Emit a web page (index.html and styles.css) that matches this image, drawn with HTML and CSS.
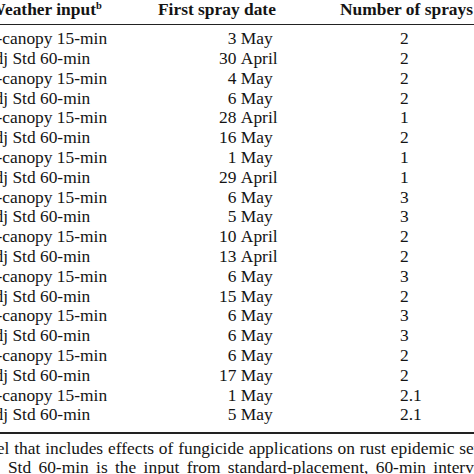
FILE: index.html
```html
<!DOCTYPE html>
<html lang="en">
<head>
<meta charset="utf-8">
<title>First spray dates</title>
<link rel="stylesheet" href="styles.css">
</head>
<body>
<div class="sheet">
  <div class="thead">
    <div class="row head">
      <div class="c1 h1">Weather input<sup>b</sup></div>
      <div class="c2 h2">First spray date</div>
      <div class="c3 h3">Number of sprays</div>
    </div>
  </div>
  <div class="tbody">
    <div class="row"><div class="c1">In-canopy 15-min</div><div class="c2"><span class="num">3</span><span class="mon">May</span></div><div class="c3">2</div></div>
    <div class="row"><div class="c1">Adj Std 60-min</div><div class="c2"><span class="num">30</span><span class="mon">April</span></div><div class="c3">2</div></div>
    <div class="row"><div class="c1">In-canopy 15-min</div><div class="c2"><span class="num">4</span><span class="mon">May</span></div><div class="c3">2</div></div>
    <div class="row"><div class="c1">Adj Std 60-min</div><div class="c2"><span class="num">6</span><span class="mon">May</span></div><div class="c3">2</div></div>
    <div class="row"><div class="c1">In-canopy 15-min</div><div class="c2"><span class="num">28</span><span class="mon">April</span></div><div class="c3">1</div></div>
    <div class="row"><div class="c1">Adj Std 60-min</div><div class="c2"><span class="num">16</span><span class="mon">May</span></div><div class="c3">2</div></div>
    <div class="row"><div class="c1">In-canopy 15-min</div><div class="c2"><span class="num">1</span><span class="mon">May</span></div><div class="c3">1</div></div>
    <div class="row"><div class="c1">Adj Std 60-min</div><div class="c2"><span class="num">29</span><span class="mon">April</span></div><div class="c3">1</div></div>
    <div class="row"><div class="c1">In-canopy 15-min</div><div class="c2"><span class="num">6</span><span class="mon">May</span></div><div class="c3">3</div></div>
    <div class="row"><div class="c1">Adj Std 60-min</div><div class="c2"><span class="num">5</span><span class="mon">May</span></div><div class="c3">3</div></div>
    <div class="row"><div class="c1">In-canopy 15-min</div><div class="c2"><span class="num">10</span><span class="mon">April</span></div><div class="c3">2</div></div>
    <div class="row"><div class="c1">Adj Std 60-min</div><div class="c2"><span class="num">13</span><span class="mon">April</span></div><div class="c3">2</div></div>
    <div class="row"><div class="c1">In-canopy 15-min</div><div class="c2"><span class="num">6</span><span class="mon">May</span></div><div class="c3">3</div></div>
    <div class="row"><div class="c1">Adj Std 60-min</div><div class="c2"><span class="num">15</span><span class="mon">May</span></div><div class="c3">2</div></div>
    <div class="row"><div class="c1">In-canopy 15-min</div><div class="c2"><span class="num">6</span><span class="mon">May</span></div><div class="c3">3</div></div>
    <div class="row"><div class="c1">Adj Std 60-min</div><div class="c2"><span class="num">6</span><span class="mon">May</span></div><div class="c3">3</div></div>
    <div class="row"><div class="c1">In-canopy 15-min</div><div class="c2"><span class="num">6</span><span class="mon">May</span></div><div class="c3">2</div></div>
    <div class="row"><div class="c1">Adj Std 60-min</div><div class="c2"><span class="num">17</span><span class="mon">May</span></div><div class="c3">2</div></div>
    <div class="row"><div class="c1">In-canopy 15-min</div><div class="c2"><span class="num">1</span><span class="mon">May</span></div><div class="c3">2.1</div></div>
    <div class="row"><div class="c1">Adj Std 60-min</div><div class="c2"><span class="num">5</span><span class="mon">May</span></div><div class="c3">2.1</div></div>
  </div>
  <div class="notes">
    <div class="fn fn1">Model that includes effects of fungicide applications on rust epidemic severity</div>
    <div class="fn fn2">Adj Std 60-min is the input from standard-placement, 60-min interval</div>
  </div>
</div>
</body>
</html>
```
FILE: styles.css
```css
html, body {
  margin: 0;
  padding: 0;
  background: #ffffff;
}
body {
  width: 474px;
  height: 474px;
  overflow: hidden;
  font-family: "Liberation Serif", "Times New Roman", serif;
  font-size: 17.4px;
  color: #141414;
}
.sheet {
  margin-left: -18px;
  width: 560px;
  padding-top: 1px;
}
.row {
  display: grid;
  grid-template-columns: 176px 182px 200px;
  line-height: 19.8px;
  white-space: nowrap;
}
.thead {
  padding-bottom: 5px;
  border-bottom: 1px solid #222;
  width: 510px;
}
.head {
  font-weight: bold;
  line-height: 17.5px;
}
.h1 {
  padding-left: 6.5px;
}
.h1 sup {
  font-size: 0.6em;
  line-height: 0;
  vertical-align: 0.55em;
}
.h2 {
  text-align: center;
}
.h3 {
  text-align: left;
}
.tbody {
  padding-top: 4.8px;
  padding-bottom: 7.2px;
  border-bottom: 2px solid #222;
  width: 510px;
}
.c2 {
  display: flex;
}
.num {
  width: 78.5px;
  text-align: right;
}
.mon {
  margin-left: 0.25em;
}
.tbody .c3 {
  padding-left: 60px;
}
.notes {
  padding-top: 4.5px;
  line-height: 18.6px;
  white-space: nowrap;
}
.fn1 {
  margin-left: -18px;
  word-spacing: 0.5px;
}
.fn2 {
  margin-left: -7.5px;
  word-spacing: 3px;
}
```
